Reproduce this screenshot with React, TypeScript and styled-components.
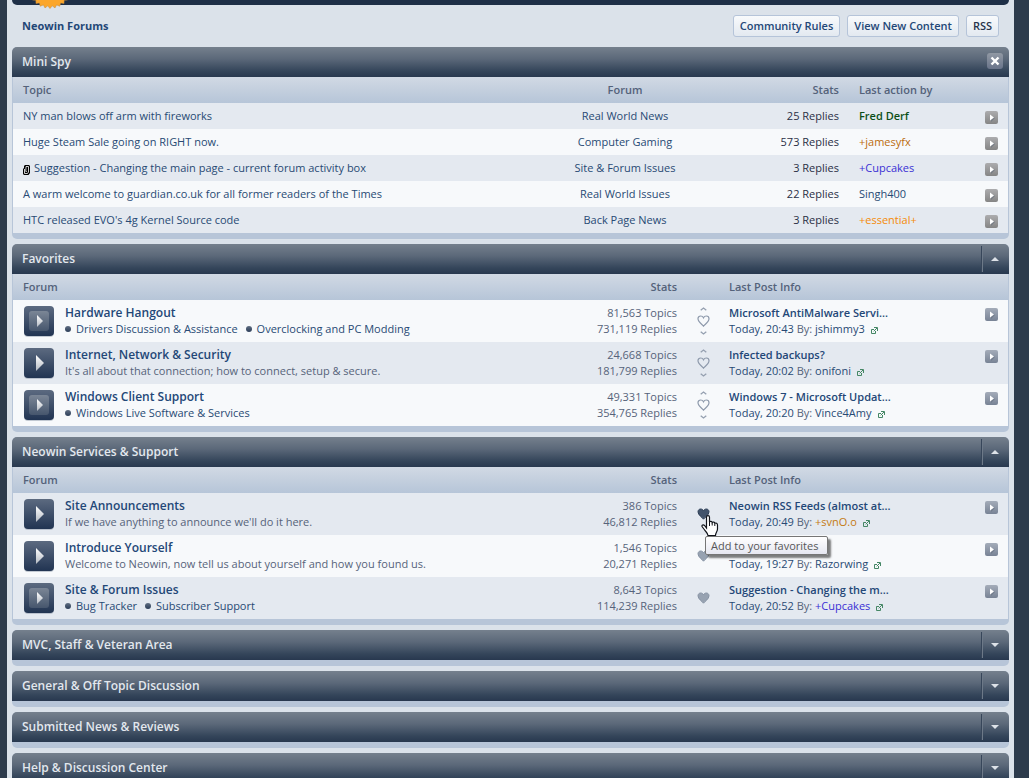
import React from "react";
import styled, { createGlobalStyle } from "styled-components";

const GlobalStyle = createGlobalStyle`
  * { box-sizing: border-box; }
  body {
    margin: 0;
    height: 100vh;
    overflow: hidden;
    background: #2d3b4c;
    color: #56637a;
    font: 11px/16px "Open Sans", "Noto Sans", sans-serif;
  }
  a { color: #284a74; text-decoration: none; }
  button { font: inherit; }
`;

const Page = styled.main`
  min-height: 100vh;
  margin: 0 15px 0 7px;
  padding: 0 5px;
  background: #dbe2ea;
`;

const TopBar = styled.header`
  position: relative;
  height: 5px;
  border-radius: 0 0 5px 5px;
  background: #1e2f47;
`;

const BadgeMark = styled.svg`
  position: absolute;
  left: 19px;
  bottom: -4px;
`;

const TitleRow = styled.div`
  display: flex;
  align-items: center;
  justify-content: space-between;
  height: 42px;
  padding: 0 10px;
`;

const PageTitle = styled.h1`
  margin: 0;
  font-size: 11px;
  font-weight: 700;
  color: #234777;
`;

const Actions = styled.nav`
  display: flex;
  gap: 7px;
`;

const ActionLink = styled.a<{ $dark?: boolean }>`
  padding: 2px 6px;
  border: 1px solid #b5c4d9;
  border-radius: 3px;
  background: linear-gradient(#f8fafc, #e3e9f0);
  font-weight: 600;
  line-height: 16px;
  color: ${(p) => (p.$dark ? "#26344b" : "#234777")};
`;

const Panel = styled.section`
  margin-bottom: 5px;
  padding-bottom: 6px;
  border-radius: 5px;
  background: #b7c5d8;
`;

const PanelHeader = styled.div`
  display: flex;
  align-items: center;
  justify-content: space-between;
  height: 30px;
  padding-left: 10px;
  border-radius: 5px 5px 0 0;
  background: linear-gradient(#75808d, #5b6879 40%, #34455a 80%, #28384f);
`;

const PanelTitle = styled.h2`
  margin: 0;
  font-size: 12px;
  font-weight: 600;
  color: #e3e8ee;
`;

const CloseButton = styled.button`
  display: grid;
  place-items: center;
  width: 16px;
  height: 16px;
  margin: 0 6px 2px 0;
  padding: 0;
  border: 0;
  border-radius: 3px;
  background: linear-gradient(#9199a4, #69748a);
`;

const ToggleButton = styled.button`
  display: grid;
  place-items: center;
  width: 28px;
  height: 26px;
  padding: 0 1px 0 0;
  border: 0;
  border-left: 1px solid #37465a;
  background: none;
  box-shadow: inset 1px 0 #6d7988;
`;

const TableFrame = styled.div`
  padding: 0 1px;
`;

const Table = styled.table`
  width: 100%;
  table-layout: fixed;
  border-collapse: collapse;
`;

const HeadRow = styled.tr`
  height: 26px;
  background: linear-gradient(#d1d9e4, #b6c5d8);
`;

type Align = "left" | "center" | "right";

const HeadCell = styled.th<{ $align?: Align }>`
  padding: 0 10px;
  text-align: ${(p) => p.$align ?? "left"};
  font-weight: 600;
  color: #54627a;
`;

const Row = styled.tr<{ $shaded: boolean; $tall?: boolean }>`
  height: ${(p) => (p.$tall ? 42 : 26)}px;
  background: ${(p) => (p.$shaded ? "#e4e9f0" : "#f7f9fb")};
`;

const Cell = styled.td<{ $align?: Align; $dark?: boolean }>`
  padding: 0 10px;
  text-align: ${(p) => p.$align ?? "left"};
  white-space: nowrap;
  color: ${(p) => (p.$dark ? "#2a2f45" : "inherit")};
`;

const IconCell = styled.td`
  padding: 6px 0 0 11px;
  vertical-align: top;

  svg { display: block; }
`;

const FavoriteCell = styled.td`
  position: relative;
  padding: 0 0 0 1px;
`;

const GoCell = styled.td`
  padding: 8px 10px 0;
  vertical-align: top;
`;

const UserLink = styled.a<{ $color?: string; $strong?: boolean }>`
  color: ${(p) => p.$color ?? "#284a74"};
  font-weight: ${(p) => (p.$strong ? 600 : 400)};
`;

const StrongLink = styled.a`
  display: block;
  min-height: 16px;
  font-weight: 600;
  color: #234777;
`;

const ForumLink = styled(StrongLink)`
  font-size: 12px;
`;

const SubForums = styled.div`
  display: flex;
  gap: 8px;
`;

const SubForum = styled.span`
  display: flex;
  align-items: center;
  gap: 5px;

  &::before {
    content: "";
    width: 6px;
    height: 6px;
    border-radius: 50%;
    background: linear-gradient(#5f6d81, #2b3d58);
  }
`;

const PlainButton = styled.button`
  display: block;
  margin: 0 auto;
  padding: 0;
  border: 0;
  background: none;

  svg { display: block; }
`;

const Reorder = styled.div`
  display: grid;
  justify-items: center;
  gap: 4px;
`;

const GoLink = styled.a`
  display: block;
  width: 13px;
  height: 13px;

  svg { display: block; }
`;

const ExternalIcon = styled.svg`
  margin-left: 6px;
  vertical-align: -1px;
`;

const ClipIcon = styled.svg`
  margin-right: 4px;
  vertical-align: -3px;
`;

const Tooltip = styled.span`
  position: absolute;
  z-index: 1;
  left: 18px;
  top: 43px;
  padding: 0 9px 0 5px;
  border: 1px solid #767676;
  border-radius: 2px;
  background: linear-gradient(#ffffff, #e6e7f1);
  box-shadow: 3px 3px 2px rgba(0, 0, 0, 0.5);
  line-height: 17px;
  white-space: nowrap;
  color: #575757;
`;

const Pointer = styled.svg`
  position: absolute;
  z-index: 2;
  left: 14px;
  top: 22px;
`;

const burst = Array.from({ length: 56 }, (_, i) => {
  const r = i % 2 ? 20 : 22.5;
  const a = (i / 56) * Math.PI * 2;
  return `${19 + r * Math.cos(a)},${-14 + r * Math.sin(a)}`;
}).join(" ");

const HEART = "M6.5 11.2 C5 9.2 1 7 1 3.8 C1 2.1 2.2 1 3.7 1 C5 1 6 1.8 6.5 2.8 C7 1.8 8 1 9.3 1 C10.8 1 12 2.1 12 3.8 C12 7 8 9.2 6.5 11.2Z";

function GoArrow({ gray, label }: { gray?: boolean; label: string }) {
  const id = gray ? "goGray" : "goBlue";
  return (
    <GoLink href="#" aria-label={label}>
      <svg width="13" height="13" viewBox="0 0 13 13">
        <defs>
          <linearGradient id={id} x1="0" y1="0" x2="0" y2="1">
            <stop offset="0" stopColor={gray ? "#acacae" : "#a4acb9"} />
            <stop offset="1" stopColor={gray ? "#858585" : "#788395"} />
          </linearGradient>
        </defs>
        <rect width="13" height="13" rx="2" fill={`url(#${id})`} />
        <path d="M6 5v6l4-4z" fill="#5e6878" opacity=".5" />
        <path d="M5 3.5v6L9 6.5z" fill="#fff" />
      </svg>
    </GoLink>
  );
}

function ForumIcon({ boxed }: { boxed?: boolean }) {
  return (
    <svg width="30" height="31" viewBox="0 0 30 31" aria-hidden="true">
      <defs>
        <linearGradient id="forumTile" x1="0" y1="0" x2="0" y2="1">
          <stop offset="0" stopColor="#5c6a80" />
          <stop offset="1" stopColor="#213452" />
        </linearGradient>
        <linearGradient id="forumArrow" x1="0" y1="0" x2="0" y2="1">
          <stop offset="0" stopColor="#ffffff" />
          <stop offset="1" stopColor="#b4bac3" />
        </linearGradient>
        <linearGradient id="forumInset" x1="0" y1="0" x2="0" y2="1">
          <stop offset="0" stopColor="#7b8696" />
          <stop offset="1" stopColor="#46566d" />
        </linearGradient>
      </defs>
      <rect y="1" width="30" height="30" rx="4" fill="#8d99aa" opacity=".5" />
      <rect width="30" height="30" rx="4" fill="url(#forumTile)" />
      {boxed && <rect x="5" y="5" width="20" height="20" rx="3" fill="url(#forumInset)" />}
      <path d={boxed ? "M13 9v12l6-6z" : "M12 7v16l8-8z"} fill="url(#forumArrow)" />
    </svg>
  );
}

function Heart({ kind }: { kind: "outline" | "muted" | "active" }) {
  const fill = kind === "outline" ? "none" : kind === "muted" ? "#97a2b1" : "#42536b";
  const stroke = kind === "outline" ? "#8d99ab" : kind === "muted" ? "#8793a4" : "#2f4058";
  return (
    <svg width="13" height="12" viewBox="0 0 13 12" aria-hidden="true">
      <path d={HEART} fill={fill} stroke={stroke} strokeWidth={kind === "outline" ? 1.2 : 1} />
    </svg>
  );
}

function Chevron({ down }: { down?: boolean }) {
  return (
    <svg width="7" height="4" viewBox="0 0 7 4" aria-hidden="true">
      <path d={down ? "M.7 .7 3.5 3 6.3 .7" : "M.7 3.3 3.5 1 6.3 3.3"} fill="none" stroke="#95a0b0" strokeWidth="1.3" />
    </svg>
  );
}

function External() {
  return (
    <ExternalIcon width="7" height="7" viewBox="0 0 7 7" aria-hidden="true">
      <path d="M3 2.5H.5v4h4V4" fill="none" stroke="#458765" />
      <path d="M3 .5h3.5v3.5M6 1 2.7 4.3" fill="none" stroke="#458765" />
    </ExternalIcon>
  );
}

type SpyRow = { topic: string; forum: string; replies: string; user: string; color?: string; strong?: boolean; clip?: boolean };

const spyRows: SpyRow[] = [
  { topic: "NY man blows off arm with fireworks", forum: "Real World News", replies: "25", user: "Fred Derf", color: "#0b4f17", strong: true },
  { topic: "Huge Steam Sale going on RIGHT now.", forum: "Computer Gaming", replies: "573", user: "+jamesyfx", color: "#bb6c0c" },
  { topic: "Suggestion - Changing the main page - current forum activity box", forum: "Site & Forum Issues", replies: "3", user: "+Cupcakes", color: "#3a2fd4", clip: true },
  { topic: "A warm welcome to guardian.co.uk for all former readers of the Times", forum: "Real World Issues", replies: "22", user: "Singh400" },
  { topic: "HTC released EVO's 4g Kernel Source code", forum: "Back Page News", replies: "3", user: "+essential+", color: "#f58a07" },
];

type Forum = {
  name: string;
  text?: string;
  subs?: string[];
  topics: string;
  replies: string;
  last?: string;
  time: string;
  user: string;
  color?: string;
  hovered?: boolean;
};

const favorites: Forum[] = [
  { name: "Hardware Hangout", subs: ["Drivers Discussion & Assistance", "Overclocking and PC Modding"], topics: "81,563", replies: "731,119", last: "Microsoft AntiMalware Servi...", time: "20:43", user: "jshimmy3" },
  { name: "Internet, Network & Security", text: "It's all about that connection; how to connect, setup & secure.", topics: "24,668", replies: "181,799", last: "Infected backups?", time: "20:02", user: "onifoni" },
  { name: "Windows Client Support", subs: ["Windows Live Software & Services"], topics: "49,331", replies: "354,765", last: "Windows 7 - Microsoft Updat...", time: "20:20", user: "Vince4Amy" },
];

const services: Forum[] = [
  { name: "Site Announcements", text: "If we have anything to announce we'll do it here.", topics: "386", replies: "46,812", last: "Neowin RSS Feeds (almost at...", time: "20:49", user: "+svnO.o", color: "#c47a10", hovered: true },
  { name: "Introduce Yourself", text: "Welcome to Neowin, now tell us about yourself and how you found us.", topics: "1,546", replies: "20,271", time: "19:27", user: "Razorwing" },
  { name: "Site & Forum Issues", subs: ["Bug Tracker", "Subscriber Support"], topics: "8,643", replies: "114,239", last: "Suggestion - Changing the m...", time: "20:52", user: "+Cupcakes", color: "#3a2fd4" },
];

const collapsed = ["MVC, Staff & Veteran Area", "General & Off Topic Discussion", "Submitted News & Reviews", "Help & Discussion Center"];

function CategoryHeader({ title, open }: { title: string; open: boolean }) {
  return (
    <PanelHeader>
      <PanelTitle>{title}</PanelTitle>
      <ToggleButton aria-label={`Toggle ${title}`} aria-expanded={open}>
        <svg width="8" height="4" viewBox="0 0 8 4" aria-hidden="true">
          <path d={open ? "M0 4 4 0l4 4z" : "M0 0h8L4 4z"} fill="#dde2e8" />
        </svg>
      </ToggleButton>
    </PanelHeader>
  );
}

function FavoriteControl({ favorite, hovered, name }: { favorite: boolean; hovered?: boolean; name: string }) {
  if (favorite) {
    return (
      <Reorder>
        <PlainButton aria-label={`Move ${name} up`}><Chevron /></PlainButton>
        <PlainButton aria-label={`Remove ${name} from favorites`}><Heart kind="outline" /></PlainButton>
        <PlainButton aria-label={`Move ${name} down`}><Chevron down /></PlainButton>
      </Reorder>
    );
  }
  return (
    <>
      <PlainButton aria-label={`Favorite ${name}`}><Heart kind={hovered ? "active" : "muted"} /></PlainButton>
      {hovered && (
        <>
          <Tooltip role="tooltip">Add to your favorites</Tooltip>
          <Pointer width="18" height="22" viewBox="0 0 18 22" aria-hidden="true">
            <path
              d="M5.5 13V2.2C5.5 .2 8.5 .2 8.5 2.2V7C9 5.9 11 6.2 11.2 7.5 12 6.6 13.6 7 13.8 8.3 15 7.6 16.5 8.4 16.5 10V14C16.5 16.5 14.5 17.5 14.5 20.5H7C7 18.3 4.5 16.5 3.3 14.5L1.2 11.8C.4 10.2 2.3 9.2 3.5 10.5Z"
              fill="#fff" stroke="#10131a" strokeWidth="1.2"
            />
            <path d="M8.5 7v4M11.2 8v2.5M13.8 9v2" stroke="#10131a" />
          </Pointer>
        </>
      )}
    </>
  );
}

function ForumPanel({ title, forums, favorite, firstShaded }: { title: string; forums: Forum[]; favorite: boolean; firstShaded: boolean }) {
  return (
    <Panel>
      <CategoryHeader title={title} open />
      <TableFrame>
        <Table>
          <colgroup>
            <col width="42" />
            <col />
            <col width="120" />
            <col width="32" />
            <col width="256" />
            <col width="33" />
          </colgroup>
          <thead>
            <HeadRow>
              <HeadCell colSpan={2}>Forum</HeadCell>
              <HeadCell $align="right">Stats</HeadCell>
              <HeadCell />
              <HeadCell colSpan={2}>Last Post Info</HeadCell>
            </HeadRow>
          </thead>
          <tbody>
            {forums.map((f, i) => (
              <Row key={f.name} $tall $shaded={(i % 2 === 0) === firstShaded}>
                <IconCell><ForumIcon boxed={Boolean(f.subs)} /></IconCell>
                <Cell>
                  <ForumLink href="#">{f.name}</ForumLink>
                  {f.text}
                  {f.subs && (
                    <SubForums>
                      {f.subs.map((s) => <SubForum key={s}><a href="#">{s}</a></SubForum>)}
                    </SubForums>
                  )}
                </Cell>
                <Cell $align="right">{f.topics} Topics<br />{f.replies} Replies</Cell>
                <FavoriteCell><FavoriteControl favorite={favorite} hovered={f.hovered} name={f.name} /></FavoriteCell>
                <Cell>
                  <StrongLink href="#">{f.last}</StrongLink>
                  <a href="#">Today, {f.time}</a> By: <UserLink href="#" $color={f.color}>{f.user}</UserLink>
                  <External />
                </Cell>
                <GoCell><GoArrow label={`Go to last post in ${f.name}`} /></GoCell>
              </Row>
            ))}
          </tbody>
        </Table>
      </TableFrame>
    </Panel>
  );
}

function MiniSpy() {
  return (
    <Panel>
      <PanelHeader>
        <PanelTitle>Mini Spy</PanelTitle>
        <CloseButton aria-label="Close Mini Spy">
          <svg width="10" height="10" viewBox="0 0 10 10" aria-hidden="true">
            <path d="M1.5 1.5 8.5 8.5M8.5 1.5 1.5 8.5" stroke="#fff" strokeWidth="2.4" />
          </svg>
        </CloseButton>
      </PanelHeader>
      <TableFrame>
        <Table>
          <colgroup>
            <col />
            <col width="218" />
            <col width="115" />
            <col width="126" />
            <col width="33" />
          </colgroup>
          <thead>
            <HeadRow>
              <HeadCell>Topic</HeadCell>
              <HeadCell $align="center">Forum</HeadCell>
              <HeadCell $align="right">Stats</HeadCell>
              <HeadCell colSpan={2}>Last action by</HeadCell>
            </HeadRow>
          </thead>
          <tbody>
            {spyRows.map((r, i) => (
              <Row key={r.topic} $shaded={i % 2 === 0}>
                <Cell>
                  {r.clip && (
                    <ClipIcon width="7" height="10" viewBox="0 0 7 10" aria-hidden="true">
                      <path d="M2 0h4l1 1v7L5.5 10H1L0 9V4l1-1V1z" fill="#000" />
                      <path d="M1.5 4v4.5h3L5.5 7V1.5H3L2.8 6.5h1" fill="none" stroke="#fff" strokeWidth=".8" />
                    </ClipIcon>
                  )}
                  <a href="#">{r.topic}</a>
                </Cell>
                <Cell $align="center"><a href="#">{r.forum}</a></Cell>
                <Cell $align="right" $dark>{r.replies} Replies</Cell>
                <Cell><UserLink href="#" $color={r.color} $strong={r.strong}>{r.user}</UserLink></Cell>
                <GoCell><GoArrow gray label={`Go to ${r.topic}`} /></GoCell>
              </Row>
            ))}
          </tbody>
        </Table>
      </TableFrame>
    </Panel>
  );
}

export default function App() {
  return (
    <>
      <GlobalStyle />
      <Page>
        <TopBar>
          <BadgeMark width="38" height="9" viewBox="0 0 38 9" aria-hidden="true">
            <polygon points={burst} fill="#fba62b" stroke="#c58a3a" strokeWidth=".5" />
          </BadgeMark>
        </TopBar>
        <TitleRow>
          <PageTitle>Neowin Forums</PageTitle>
          <Actions>
            <ActionLink href="#">Community Rules</ActionLink>
            <ActionLink href="#">View New Content</ActionLink>
            <ActionLink href="#" $dark>RSS</ActionLink>
          </Actions>
        </TitleRow>
        <MiniSpy />
        <ForumPanel title="Favorites" forums={favorites} favorite firstShaded={false} />
        <ForumPanel title="Neowin Services & Support" forums={services} favorite={false} firstShaded />
        {collapsed.map((title) => (
          <Panel key={title}>
            <CategoryHeader title={title} open={false} />
          </Panel>
        ))}
      </Page>
    </>
  );
}
